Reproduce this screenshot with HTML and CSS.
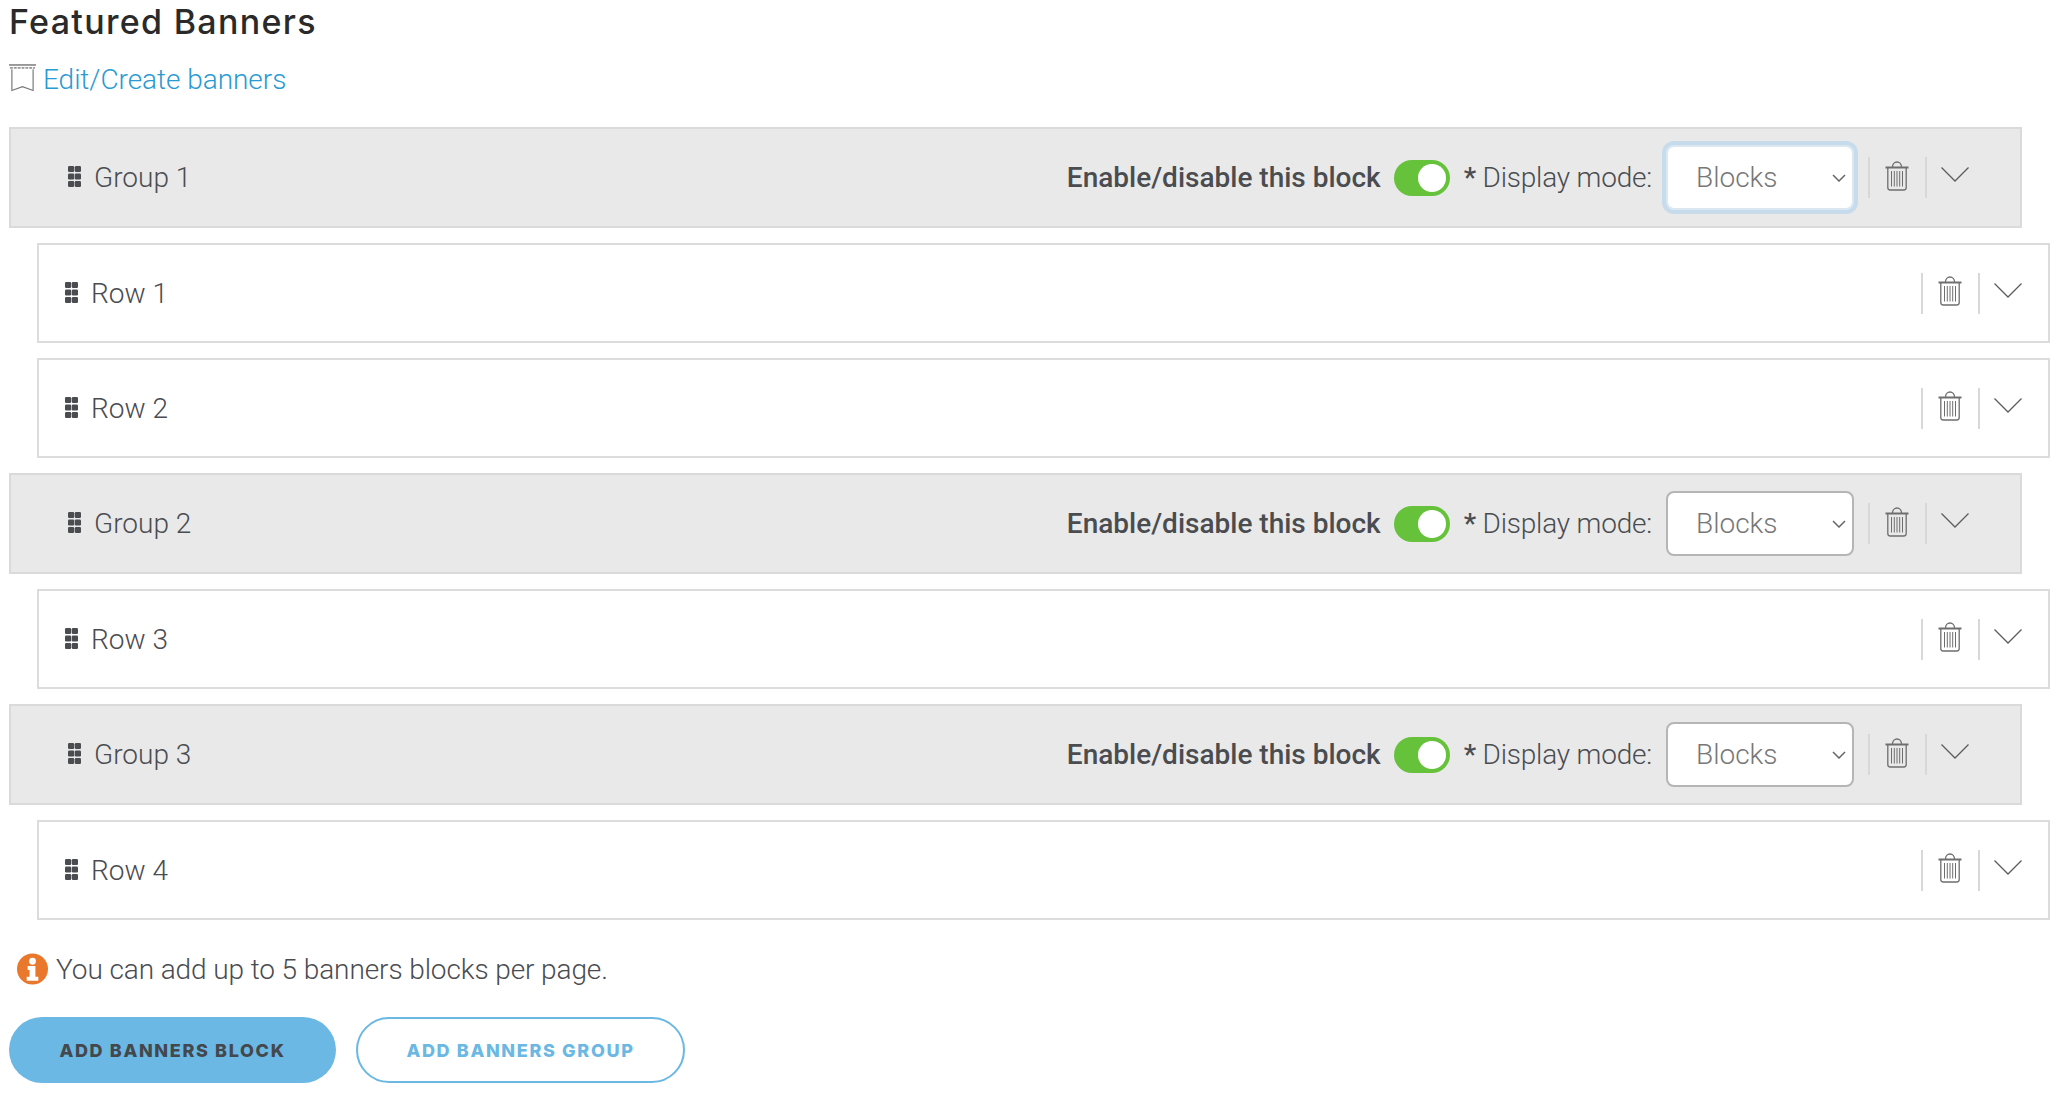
FILE: index.html
```html
<!DOCTYPE html>
<html lang="en">
<head>
<meta charset="utf-8">
<title>Featured Banners</title>
<link rel="stylesheet" href="styles.css">
</head>
<body>
<svg class="defs" width="0" height="0" aria-hidden="true">
  <symbol id="grip" viewBox="0 0 13 21"><g fill="#4a4c50"><rect x="0" y="0" width="6.200" height="6" rx="1.200"/><rect x="6.800" y="0" width="6.200" height="6" rx="1.200"/><rect x="0" y="7.500" width="6.200" height="6" rx="1.200"/><rect x="6.800" y="7.500" width="6.200" height="6" rx="1.200"/><rect x="0" y="15" width="6.200" height="6" rx="1.200"/><rect x="6.800" y="15" width="6.200" height="6" rx="1.200"/></g></symbol>
  <symbol id="trash" viewBox="0 0 24 30"><g fill="none" stroke="#6e6e6e" stroke-width="1.300"><path d="M.5 6.500h23" stroke-width="2"/><path d="M7.500 6c0-3 2-5 4.500-5s4.500 2 4.500 5"/><path d="M2.800 7v19.500c0 1.500 1 2.500 2.500 2.500h13.400c1.500 0 2.500-1 2.500-2.500V7"/><path d="M6.500 10v15.500M9.300 10v15.500M12 10v15.500M14.700 10v15.500M17.500 10v15.500" stroke-width="1"/></g></symbol>
  <symbol id="chev" viewBox="0 0 28 15"><path d="M.5.5 14 14 27.500.5" fill="none" stroke="#5c5c5c" stroke-width="1.300"/></symbol>
  <symbol id="mini" viewBox="0 0 14 8"><path d="M1 1l6 6 6-6" fill="none" stroke="#666" stroke-width="1.500"/></symbol>
</svg>
<main class="page">
  <h1 class="title">Featured Banners</h1>
  <p class="edit">
    <svg class="flag" viewBox="0 0 28 29" aria-hidden="true"><path d="M0 1.500h28" stroke="#777" stroke-width="1.500"/><path d="M1 4.500h26" stroke="#999" stroke-width="2" stroke-dasharray="3 1"/><path d="M3 6v22l11-4 11 4V6" fill="none" stroke="#777" stroke-width="1.200"/></svg>
    <a class="edit-link" href="#">Edit/Create banners</a>
  </p>
  <section class="list">
    <div class="item group">
      <svg class="grip"><use href="#grip"/></svg><span class="name">Group 1</span>
      <span class="enable">Enable/disable this block</span><span class="toggle"><span class="knob"></span></span>
      <span class="mode"><span class="star">*</span> Display mode:</span>
      <div class="select focused"><span>Blocks</span><svg class="mini"><use href="#mini"/></svg></div>
      <span class="sep sep-a"></span><svg class="trash"><use href="#trash"/></svg><span class="sep sep-b"></span><svg class="chev"><use href="#chev"/></svg>
    </div>
    <div class="item row">
      <svg class="grip"><use href="#grip"/></svg><span class="name">Row 1</span>
      <span class="sep sep-a"></span><svg class="trash"><use href="#trash"/></svg><span class="sep sep-b"></span><svg class="chev"><use href="#chev"/></svg>
    </div>
    <div class="item row">
      <svg class="grip"><use href="#grip"/></svg><span class="name">Row 2</span>
      <span class="sep sep-a"></span><svg class="trash"><use href="#trash"/></svg><span class="sep sep-b"></span><svg class="chev"><use href="#chev"/></svg>
    </div>
    <div class="item group">
      <svg class="grip"><use href="#grip"/></svg><span class="name">Group 2</span>
      <span class="enable">Enable/disable this block</span><span class="toggle"><span class="knob"></span></span>
      <span class="mode"><span class="star">*</span> Display mode:</span>
      <div class="select"><span>Blocks</span><svg class="mini"><use href="#mini"/></svg></div>
      <span class="sep sep-a"></span><svg class="trash"><use href="#trash"/></svg><span class="sep sep-b"></span><svg class="chev"><use href="#chev"/></svg>
    </div>
    <div class="item row">
      <svg class="grip"><use href="#grip"/></svg><span class="name">Row 3</span>
      <span class="sep sep-a"></span><svg class="trash"><use href="#trash"/></svg><span class="sep sep-b"></span><svg class="chev"><use href="#chev"/></svg>
    </div>
    <div class="item group">
      <svg class="grip"><use href="#grip"/></svg><span class="name">Group 3</span>
      <span class="enable">Enable/disable this block</span><span class="toggle"><span class="knob"></span></span>
      <span class="mode"><span class="star">*</span> Display mode:</span>
      <div class="select"><span>Blocks</span><svg class="mini"><use href="#mini"/></svg></div>
      <span class="sep sep-a"></span><svg class="trash"><use href="#trash"/></svg><span class="sep sep-b"></span><svg class="chev"><use href="#chev"/></svg>
    </div>
    <div class="item row">
      <svg class="grip"><use href="#grip"/></svg><span class="name">Row 4</span>
      <span class="sep sep-a"></span><svg class="trash"><use href="#trash"/></svg><span class="sep sep-b"></span><svg class="chev"><use href="#chev"/></svg>
    </div>
  </section>
  <p class="note">
    <svg class="info" viewBox="0 0 32 32" aria-hidden="true"><circle cx="16" cy="16" r="16" fill="#e9772c"/><circle cx="16" cy="8" r="3.500" fill="#fff"/><path d="M11 13h8v11h3v4H10v-4h3v-7h-2z" fill="#fff"/></svg>
    <span>You can add up to 5 banners blocks per page.</span>
  </p>
  <div class="actions">
    <button class="btn btn-fill" type="button">ADD BANNERS BLOCK</button>
    <button class="btn btn-line" type="button">ADD BANNERS GROUP</button>
  </div>
</main>
</body>
</html>
```
FILE: styles.css
```css
html, body { margin: 0; padding: 0; background: #fff; }
body { font-family: Roboto, "Liberation Sans", sans-serif; color: #4a4c50; overflow: hidden; }
.defs { position: absolute; }
.page { padding: 0 14px 0 9px; }
.title { margin: 0; height: 43px; font-family: Inter, "Liberation Sans", sans-serif; font-size: 34px; line-height: 43px; font-weight: 500; color: #2a2a2a; letter-spacing: 1.300px; }
.edit { margin: 18px 0 0; height: 36px; display: flex; align-items: center; gap: 7px; }
.flag { width: 27px; height: 29px; flex: none; margin-top: -3px; }
.edit-link { font-size: 28px; font-weight: 300; color: #2a9ad2; text-decoration: none; letter-spacing: -.05px; }
.list { margin-top: 30px; display: flex; flex-direction: column; gap: 15px; }
.item { box-sizing: border-box; display: flex; align-items: center; border: 2px solid #dcdcdc; font-size: 28px; font-weight: 300; }
.group { width: 2013px; height: 101px; background: #e9e9e9; padding: 0 51px 0 57px; border-color: #dadada; }
.row { width: 2013px; height: 100px; margin-left: 28px; background: #fff; padding: 0 26px 0 26px; }
.grip { width: 13px; height: 21px; flex: none; margin-top: -2px; }
.name { margin-left: 13px; font-weight: 300; }
.enable { margin-left: auto; font-weight: 500; }
.toggle { margin-left: 13px; width: 56px; height: 36px; border-radius: 18px; background: #66c23a; display: flex; align-items: center; justify-content: flex-end; padding-right: 4px; box-sizing: border-box; }
.knob { width: 28px; height: 28px; border-radius: 50%; background: #fff; }
.mode { margin-left: 14px; letter-spacing: -.2px; }
.star { font-weight: 500; }
.select { box-sizing: border-box; margin-left: 14px; width: 188px; height: 65px; background: #fff; border: 2px solid #b5b5b5; border-radius: 8px; padding: 0 6px 0 28px; display: flex; align-items: center; justify-content: space-between; color: #777; letter-spacing: 0; }
.focused { border-color: #dbe8f2; box-shadow: 0 0 0 4px #c6dcec; }
.mini { width: 14px; height: 8px; flex: none; }
.sep { width: 2px; height: 41px; background: #d8d8d8; flex: none; }
.group .sep-a { margin-left: 14px; }
.row .sep-a { margin-left: auto; }
.trash { width: 24px; height: 30px; flex: none; margin: -4px 16px 0 15px; }
.chev { width: 28px; height: 15px; flex: none; margin: -6px 0 0 14px; }
.note { margin: 29px 0 0 8px; height: 40px; display: flex; align-items: center; gap: 8px; font-size: 28px; font-weight: 300; letter-spacing: -.1px; color: #4a4c50; }
.info { width: 31px; height: 32px; flex: none; }
.actions { margin-top: 28px; display: flex; gap: 20px; }
.btn { box-sizing: border-box; height: 66px; border-radius: 33px; font-family: Inter, "Liberation Sans", sans-serif; font-size: 18px; font-weight: 800; letter-spacing: 1.650px; cursor: pointer; }
.btn-fill { width: 327px; background: #6ab8e3; border: 0; color: #44474c; }
.btn-line { width: 329px; background: #fff; border: 2px solid #6ab8e3; color: #6ab8e3; }
```
